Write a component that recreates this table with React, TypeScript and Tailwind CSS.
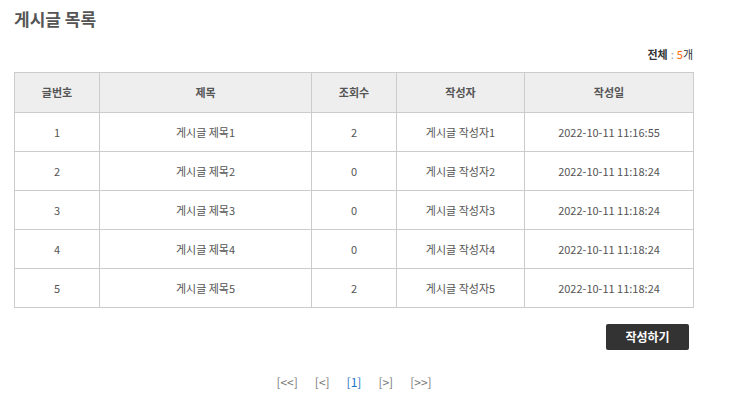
const posts = [
  { id: 1, title: "게시글 제목1", views: 2, writer: "게시글 작성자1", date: "2022-10-11 11:16:55" },
  { id: 2, title: "게시글 제목2", views: 0, writer: "게시글 작성자2", date: "2022-10-11 11:18:24" },
  { id: 3, title: "게시글 제목3", views: 0, writer: "게시글 작성자3", date: "2022-10-11 11:18:24" },
  { id: 4, title: "게시글 제목4", views: 0, writer: "게시글 작성자4", date: "2022-10-11 11:18:24" },
  { id: 5, title: "게시글 제목5", views: 2, writer: "게시글 작성자5", date: "2022-10-11 11:18:24" },
];

export default function App() {
  return (
    <div className="min-h-[419px] bg-white text-[#555] font-['Noto_Sans_CJK_KR','Noto_Sans',sans-serif] px-[14px] pt-[6px]">
      <h1 className="text-[17px] font-bold leading-[26px] text-[#555]">게시글 목록</h1>

      <div className="w-[679px] flex justify-end mt-[14px] text-[11px] leading-[16px] text-[#333]">
        <span className="font-bold">전체</span>
        <span className="mx-[3px] text-[#999]">:</span>
        <span className="text-[#ff6a00]">5</span>
        <span>개</span>
      </div>

      {/* 목록 테이블 */}
      <table className="mt-[10px] w-[680px] border-collapse text-[11px] text-center">
        <thead>
          <tr className="h-[40px] bg-[#eeeeee] font-bold text-[#555]">
            <th className="w-[85px] border border-[#cccccc] font-bold">글번호</th>
            <th className="w-[212px] border border-[#cccccc] font-bold">제목</th>
            <th className="w-[85px] border border-[#cccccc] font-bold">조회수</th>
            <th className="w-[128px] border border-[#cccccc] font-bold">작성자</th>
            <th className="border border-[#cccccc] font-bold">작성일</th>
          </tr>
        </thead>
        <tbody>
          {posts.map((p) => (
            <tr key={p.id} className="h-[39px]">
              <td className="border border-[#cccccc]">{p.id}</td>
              <td className="border border-[#cccccc]">{p.title}</td>
              <td className="border border-[#cccccc]">{p.views}</td>
              <td className="border border-[#cccccc]">{p.writer}</td>
              <td className="border border-[#cccccc]">{p.date}</td>
            </tr>
          ))}
        </tbody>
      </table>

      <div className="w-[675px] flex justify-end mt-[16px]">
        <button className="w-[83px] h-[26px] bg-[#333333] text-white text-[12px] font-bold rounded-[2px]">
          작성하기
        </button>
      </div>

      <div className="w-[680px] flex justify-center items-center gap-[17px] mt-[23px] text-[12px] text-[#777]">
        <span>[&lt;&lt;]</span>
        <span>[&lt;]</span>
        <span className="text-[#1a73c8]">[1]</span>
        <span>[&gt;]</span>
        <span>[&gt;&gt;]</span>
      </div>
    </div>
  );
}
